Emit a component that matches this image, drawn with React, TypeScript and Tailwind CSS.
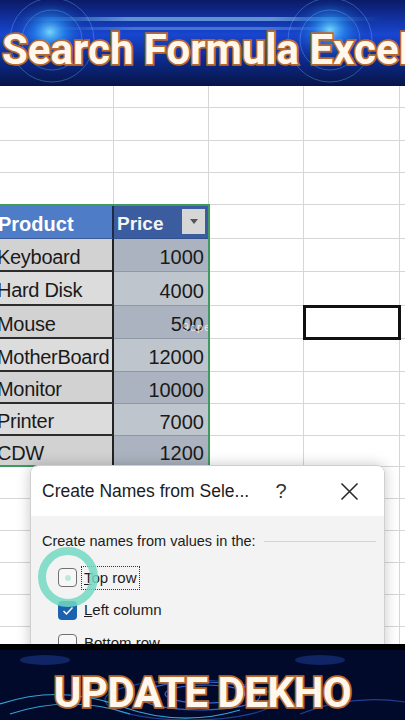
import React from 'react'

const rowHeights = [22, 33, 32, 32, 34, 33, 34, 33, 33, 32, 32, 31, 32, 32, 32, 32, 32, 32]
const colWidths = [114, 95, 95, 96, 10]

const products = [
  { name: 'Keyboard', price: '1000' },
  { name: 'Hard Disk', price: '4000' },
  { name: 'Mouse', price: '500' },
  { name: 'MotherBoard', price: '12000' },
  { name: 'Monitor', price: '10000' },
  { name: 'Printer', price: '7000' },
  { name: 'CDW', price: '1200' },
]

const outline = "[paint-order:stroke_fill] [-webkit-text-stroke:3.5px_#b8692f]"

function HeaderBanner() {
  return (
    <div className="relative h-[86px] overflow-hidden bg-[#0a1c63]">
      <svg className="absolute inset-0" width="405" height="86" viewBox="0 0 405 86">
        <defs>
          <linearGradient id="hb" x1="0" y1="0" x2="0" y2="1">
            <stop offset="0" stopColor="#0a1a66" />
            <stop offset="0.4" stopColor="#1846d0" />
            <stop offset="0.7" stopColor="#0d2a8a" />
            <stop offset="1" stopColor="#061447" />
          </linearGradient>
          <radialGradient id="glow" cx="0.5" cy="0.5" r="0.5">
            <stop offset="0" stopColor="#7fe6ff" stopOpacity="0.9" />
            <stop offset="0.4" stopColor="#2aa0ff" stopOpacity="0.5" />
            <stop offset="1" stopColor="#1030a0" stopOpacity="0" />
          </radialGradient>
          <linearGradient id="streak" x1="0" y1="0" x2="1" y2="0">
            <stop offset="0" stopColor="#5fd0ff" stopOpacity="0" />
            <stop offset="0.3" stopColor="#9fdcff" stopOpacity="0.7" />
            <stop offset="0.7" stopColor="#9fdcff" stopOpacity="0.7" />
            <stop offset="1" stopColor="#5fd0ff" stopOpacity="0" />
          </linearGradient>
        </defs>
        <rect width="405" height="86" fill="url(#hb)" />
        <rect x="20" y="17" width="360" height="4" fill="url(#streak)" opacity="0.8" />
        <rect x="40" y="27" width="320" height="3" fill="url(#streak)" opacity="0.5" />
        <ellipse cx="50" cy="32" rx="40" ry="34" fill="url(#glow)" />
        <ellipse cx="330" cy="30" rx="40" ry="34" fill="url(#glow)" />
        <g fill="none" stroke="#6fb8ff" strokeOpacity="0.45" strokeWidth="0.8">
          <circle cx="52" cy="40" r="30" />
          <circle cx="52" cy="40" r="42" />
          <circle cx="330" cy="40" r="30" />
          <circle cx="330" cy="40" r="42" />
        </g>
      </svg>
      <div className={`relative whitespace-nowrap pl-[2px] pt-[29px] font-['Roboto',sans-serif] text-[42px] font-bold leading-[42px] text-[#fff6ec] ${outline}`}>
        Search Formula Excel
      </div>
    </div>
  )
}

function FooterBanner() {
  return (
    <div className="relative h-[76px] overflow-hidden bg-[#020a2c]">
      <svg className="absolute inset-0" width="405" height="76" viewBox="0 0 405 76">
        <rect width="405" height="6" fill="#000" />
        <ellipse cx="45" cy="16" rx="25" ry="5" fill="#2a5ad0" opacity="0.35" />
        <ellipse cx="320" cy="16" rx="25" ry="5" fill="#2a5ad0" opacity="0.35" />
        <g fill="none" stroke="#3f7cff" strokeWidth="1.2" opacity="0.8">
          <ellipse cx="200" cy="52" rx="60" ry="14" />
          <ellipse cx="205" cy="50" rx="40" ry="9" />
          <ellipse cx="190" cy="56" rx="85" ry="20" opacity="0.6" />
          <path d="M0 60 Q60 40 120 62 T240 66" stroke="#46c8ff" />
          <path d="M10 70 Q70 50 130 70" stroke="#46c8ff" />
          <path d="M300 70 Q350 50 405 58" opacity="0.6" />
        </g>
      </svg>
      <div className={`relative whitespace-nowrap pt-[28px] text-center font-['Roboto',sans-serif] text-[42px] font-bold leading-[42px] tracking-[-0.5px] text-[#fff6ec] ${outline}`}>
        UPDATE DEKHO
      </div>
    </div>
  )
}

function Sheet() {
  return (
    <div className="relative h-[558px] overflow-hidden bg-white font-['Liberation_Sans',sans-serif]">
      {rowHeights.map((h, r) => {
        const t = r - 4
        return (
          <div key={r} className="flex" style={{ height: h }}>
            {colWidths.map((w, c) => {
              if (t === 0 && c === 0) {
                return (
                  <div key={c} className="flex shrink-0 items-center border-r-2 border-b border-r-[#1f2a44] border-b-[#3c5a96] bg-[#4f7cc6] pt-[4px] text-[20px] font-bold text-white" style={{ width: w }}>
                    <span className="-ml-[2px]">Product</span>
                  </div>
                )
              }
              if (t === 0 && c === 1) {
                return (
                  <div key={c} className="flex shrink-0 items-center border-r border-b border-r-[#d4d4d4] border-b-[#31508c] bg-[#3b5c9e] pl-[3px] text-[19px] font-bold text-[#f4f4f4]" style={{ width: w }}>
                    <span className="pt-[5px]">Price</span>
                    <div className="ml-auto mr-[3px] flex h-[25px] w-[23px] items-center justify-center bg-[#d6d6d6]">
                      <div className="h-0 w-0 border-x-[4px] border-t-[5px] border-x-transparent border-t-[#555]" />
                    </div>
                  </div>
                )
              }
              if (t >= 1 && t <= 7 && c === 0) {
                const p = products[t - 1]
                return (
                  <div key={c} className={`flex shrink-0 items-center border-r-2 border-b-2 border-r-[#222] border-b-[#2c2c2c] pt-[4px] text-[20px] tracking-[-0.3px] text-[#1a1a1a] ${t % 2 ? 'bg-[#d2d2d2]' : 'bg-[#dcdcdc]'}`} style={{ width: w }}>
                    <span className="-ml-[3px] whitespace-nowrap">{p.name}</span>
                  </div>
                )
              }
              if (t >= 1 && t <= 7 && c === 1) {
                const p = products[t - 1]
                return (
                  <div key={c} className={`relative flex shrink-0 items-center justify-end border-r border-b border-r-[#d4d4d4] border-b-[#8e98a6] pt-[4px] pr-[4px] text-[20px] text-[#1a1a1a] ${t % 2 ? 'bg-[#aab3bf]' : 'bg-[#bfc5cd]'}`} style={{ width: w }}>
                    {p.price}
                    {t === 3 && (
                      <span className="absolute right-[-8px] top-[13px] text-[11px] tracking-[1px] text-white/75">9oper</span>
                    )}
                  </div>
                )
              }
              return <div key={c} className="shrink-0 border-r border-b border-[#d6d6d6]" style={{ width: w }} />
            })}
          </div>
        )
      })}

      {/* selected table outline */}
      <div className="pointer-events-none absolute left-[-2px] top-[118px] h-[263px] w-[212px] border-2 border-[#3f9a5e]" />
      {/* active cell */}
      <div className="pointer-events-none absolute left-[303px] top-[219px] h-[35px] w-[98px] border-[3px] border-[#111]" />

      <Dialog />
    </div>
  )
}

function Dialog() {
  return (
    <div className="absolute left-[30px] top-[379px] w-[355px] overflow-hidden rounded-[8px] border border-[#cfcfcf] shadow-[0_0_14px_rgba(0,0,0,0.22)] font-['Liberation_Sans',sans-serif]">
      <div className="flex h-[50px] items-center bg-white pl-[11px]">
        <span className="whitespace-nowrap text-[17.5px] text-[#1c1c1c]">Create Names from Sele...</span>
        <div className="ml-auto flex items-center gap-[28px] pr-[15px]">
          <span className="w-[40px] text-center text-[20px] text-[#333]">?</span>
          <span className="flex w-[40px] justify-center">
            <svg width="19" height="19" viewBox="0 0 19 19">
              <path d="M1.5 1.5 L17.5 17.5 M17.5 1.5 L1.5 17.5" stroke="#2a2a2a" strokeWidth="1.6" fill="none" />
            </svg>
          </span>
        </div>
      </div>
      <div className="relative h-[200px] bg-[#f3f3f3] pl-[11px] pt-[15px]">
        <div className="flex items-center">
          <span className="whitespace-nowrap text-[14.5px] leading-[20px] text-[#1c1c1c]">Create names from values in the:</span>
          <div className="ml-[8px] mr-[8px] h-px flex-1 bg-[#d3d3d3]" />
        </div>
        <div className="mt-[10px]">
          <div className="flex h-[33px] items-center pl-[16px]">
            <div className="flex h-[19px] w-[19px] items-center justify-center rounded-[4px] border border-[#707070] bg-[#f7f7f7]">
              <div className="h-[6px] w-[6px] rounded-full bg-[#bfe9df]" />
            </div>
            <span className="ml-[4px] border border-dotted border-[#333] px-[2px] text-[15px] leading-[22px] text-[#1c1c1c]">
              <span className="underline">T</span>op row
            </span>
          </div>
          <div className="flex h-[33px] items-center pl-[16px]">
            <div className="flex h-[19px] w-[19px] items-center justify-center rounded-[4px] bg-[#1a62b0]">
              <svg width="12" height="10" viewBox="0 0 12 10">
                <path d="M1.5 5 L4.5 8 L10.5 1.5" stroke="#fff" strokeWidth="1.5" fill="none" />
              </svg>
            </div>
            <span className="ml-[7px] text-[15px] text-[#1c1c1c]">
              <span className="underline">L</span>eft column
            </span>
          </div>
          <div className="flex h-[33px] items-center pl-[16px]">
            <div className="h-[19px] w-[19px] rounded-[4px] border border-[#707070] bg-[#f7f7f7]" />
            <span className="ml-[7px] text-[15px] text-[#1c1c1c]">
              <span className="underline">B</span>ottom row
            </span>
          </div>
        </div>
        {/* click highlight ring */}
        <div className="pointer-events-none absolute left-[7px] top-[31px] h-[60px] w-[60px] rounded-full border-[8px] border-[#72d8c2]/85" />
      </div>
    </div>
  )
}

export default function App() {
  return (
    <div className="w-[405px] overflow-hidden bg-white">
      <HeaderBanner />
      <Sheet />
      <FooterBanner />
    </div>
  )
}
